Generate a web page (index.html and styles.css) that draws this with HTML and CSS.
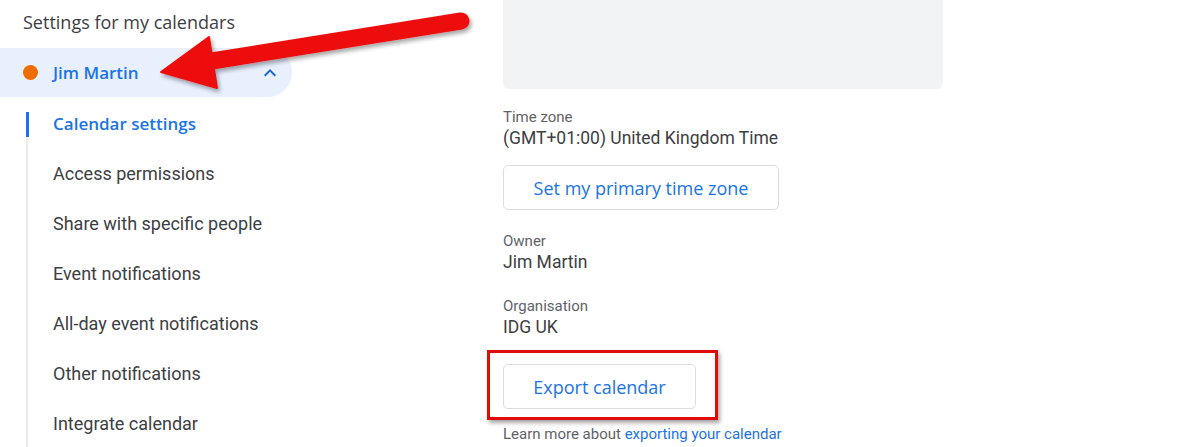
FILE: index.html
```html
<!DOCTYPE html>
<html>

<head>
	<title>Calendar settings</title>
	<link rel="stylesheet" href="styles.css">
</head>

<body>
	<div class="page">
		<aside class="sidebar">
			<h2 class="sidebar-title">Settings for my calendars</h2>
			<div class="calendar-row">
				<span class="dot"></span>
				<span class="calendar-name">Jim Martin</span>
				<svg class="chevron" width="24" height="24" viewBox="0 0 24 24">
					<path d="M7.4 15.4 12 10.8l4.6 4.6L18 14l-6-6-6 6z" fill="#1967d2"/>
				</svg>
			</div>
			<ul class="nav">
				<li class="nav-item active">Calendar settings</li>
				<li class="nav-item">Access permissions</li>
				<li class="nav-item">Share with specific people</li>
				<li class="nav-item">Event notifications</li>
				<li class="nav-item">All-day event notifications</li>
				<li class="nav-item">Other notifications</li>
				<li class="nav-item">Integrate calendar</li>
			</ul>
		</aside>

		<main class="content">
			<div class="grey-box"></div>

			<div class="field">
				<div class="field-label">Time zone</div>
				<div class="field-value">(GMT+01:00) United Kingdom Time</div>
			</div>
			<button class="btn btn-zone" type="button">Set my primary time zone</button>

			<div class="field field-owner">
				<div class="field-label">Owner</div>
				<div class="field-value">Jim Martin</div>
			</div>

			<div class="field field-org">
				<div class="field-label">Organisation</div>
				<div class="field-value">IDG UK</div>
			</div>

			<div class="export-wrap">
				<button class="btn btn-export" type="button">Export calendar</button>
				<div class="highlight-box"></div>
			</div>

			<p class="learn">Learn more about <a href="#">exporting your calendar</a></p>
		</main>
	</div>

	<svg class="arrow" width="480" height="100" viewBox="0 0 480 100">
		<defs>
			<filter id="shadow" x="-10%" y="-30%" width="120%" height="160%">
				<feDropShadow dx="2" dy="3" stdDeviation="2" flood-color="#000" flood-opacity="0.35"/>
			</filter>
		</defs>
		<g filter="url(#shadow)" fill="#ee1111" stroke="#ee1111">
			<line x1="212" y1="61" x2="461" y2="21" stroke-width="17" stroke-linecap="round"/>
			<polygon points="161,72 209,37 217,88" stroke-width="2" stroke-linejoin="round"/>
		</g>
	</svg>
</body>

</html>
```

FILE: styles.css
```css
body {
	margin: 0;
	background: #fff;
	font-family: Roboto, "Liberation Sans", sans-serif;
	color: #3c4043;
	overflow: hidden;
}

.page {
	display: flex;
	height: 447px;
}

.sidebar {
	width: 503px;
	flex: none;
}

.sidebar-title {
	margin: 0;
	padding: 10px 0 0 23px;
	height: 38px;
	box-sizing: border-box;
	height: 48px;
	font-family: "Open Sans", Roboto, sans-serif;
	font-size: 18px;
	font-weight: 400;
	color: #3c4043;
}

.calendar-row {
	display: flex;
	align-items: center;
	width: 292px;
	height: 49px;
	background: #e8f0fe;
	border-radius: 0 25px 25px 0;
	box-sizing: border-box;
	padding: 0 0 0 23px;
}

.dot {
	width: 15px;
	height: 15px;
	border-radius: 50%;
	background: #ef6c00;
	margin-right: 15px;
}

.calendar-name {
	flex: 1;
	font-family: "Open Sans", Roboto, sans-serif;
	font-size: 17px;
	font-weight: 600;
	color: #1a73e8;
}

.chevron {
	margin-right: 10px;
}

.nav {
	list-style: none;
	margin: 16px 0 0 26px;
	padding: 0;
	border-left: 2px solid #e8eaed;
}

.nav-item {
	height: 50px;
	line-height: 22px;
	padding-left: 25px;
	font-size: 18px;
	color: #3c4043;
	position: relative;
}

.nav-item.active {
	font-family: "Open Sans", Roboto, sans-serif;
	font-size: 17px;
	font-weight: 600;
	color: #1a73e8;
}

.nav-item.active::before {
	content: "";
	position: absolute;
	left: -2px;
	top: -1px;
	width: 3px;
	height: 25px;
	background: #1a73e8;
}

.content {
	flex: 1;
}

.grey-box {
	width: 440px;
	height: 89px;
	background: #f1f3f4;
	border-radius: 0 0 6px 6px;
}

.field {
	margin-top: 19px;
}

.field-label {
	font-size: 15px;
	line-height: 18px;
	color: #5f6368;
}

.field-value {
	font-size: 17.5px;
	line-height: 24px;
	color: #3c4043;
}

.btn {
	display: block;
	height: 45px;
	padding: 0 28px;
	background: #fff;
	border: 1px solid #dadce0;
	border-radius: 5px;
	font-family: "Open Sans", Roboto, sans-serif;
	font-size: 18px;
	font-weight: 500;
	color: #1a73e8;
}

.btn-zone {
	margin-top: 15px;
	width: 276px;
}

.field-owner {
	margin-top: 22px;
}

.field-org {
	margin-top: 23px;
}

.export-wrap {
	position: relative;
	margin-top: 25px;
}

.btn-export {
	width: 193px;
}

.highlight-box {
	position: absolute;
	left: -16px;
	top: -14px;
	width: 225px;
	height: 64px;
	border: 3px solid #e00b0b;
	box-shadow: 2px 3px 4px rgba(0, 0, 0, 0.35);
}

.learn {
	margin: 16px 0 0;
	font-size: 15px;
	color: #5f6368;
}

.learn a {
	color: #1a73e8;
	text-decoration: none;
}

.arrow {
	position: absolute;
	left: 0;
	top: 0;
}
```
